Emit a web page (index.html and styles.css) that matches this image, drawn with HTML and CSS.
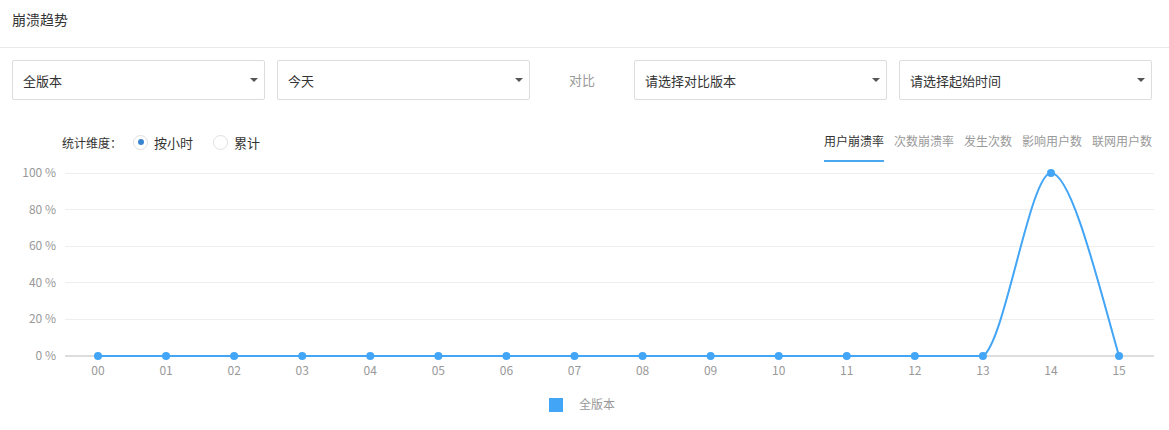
FILE: index.html
```html
<!DOCTYPE html>
<html lang="zh-CN">
<head>
  <meta charset="UTF-8">
  <title>崩溃趋势</title>
  <link rel="stylesheet" href="styles.css">
</head>
<body>
  <header class="panel-head">崩溃趋势</header>

  <section class="filters">
    <div class="select"><span>全版本</span><i class="caret"></i></div>
    <div class="select"><span>今天</span><i class="caret"></i></div>
    <div class="compare-label">对比</div>
    <div class="select"><span>请选择对比版本</span><i class="caret"></i></div>
    <div class="select"><span>请选择起始时间</span><i class="caret"></i></div>
  </section>

  <section class="chart-panel">
    <div class="toolbar">
      <div class="dimension">
        <span class="dim-label">统计维度：</span>
        <label class="radio checked"><i></i>按小时</label>
        <label class="radio"><i></i>累计</label>
      </div>
      <ul class="tabs">
        <li class="active">用户崩溃率</li>
        <li>次数崩溃率</li>
        <li>发生次数</li>
        <li>影响用户数</li>
        <li>联网用户数</li>
      </ul>
    </div>

    <!-- viewBox uses page coordinates so the numbers read straight off the screenshot -->
    <svg class="chart" viewBox="0 162 1169 268" width="1169" height="268">
      <g class="grid">
        <line x1="65" y1="173.5" x2="1154" y2="173.5"></line>
        <line x1="65" y1="209.5" x2="1154" y2="209.5"></line>
        <line x1="65" y1="246.5" x2="1154" y2="246.5"></line>
        <line x1="65" y1="282.5" x2="1154" y2="282.5"></line>
        <line x1="65" y1="319.5" x2="1154" y2="319.5"></line>
      </g>
      <line class="axis" x1="65" y1="356" x2="1154" y2="356"></line>

      <g class="y-labels">
        <text x="56" y="177">100 %</text>
        <text x="56" y="214">80 %</text>
        <text x="56" y="250">60 %</text>
        <text x="56" y="287">40 %</text>
        <text x="56" y="323">20 %</text>
        <text x="56" y="360">0 %</text>
      </g>
      <g class="x-labels" id="x-labels"></g>

      <path class="series" d="M98,356 L983,356 C1005,342 1030,173 1051,173 C1072,173 1100,290 1119,356"></path>
      <g class="dots" id="dots"></g>

      <rect class="legend-box" x="549" y="398" width="14" height="14"></rect>
      <text class="legend-text" x="579" y="409">全版本</text>
    </svg>
  </section>

  <script>
    // hourly values, percentage
    const values = [0, 0, 0, 0, 0, 0, 0, 0, 0, 0, 0, 0, 0, 0, 100, 0];
    const ns = 'http://www.w3.org/2000/svg';
    const xLabels = document.getElementById('x-labels');
    const dots = document.getElementById('dots');

    values.forEach(function(v, i) {
      const x = 98 + i * 68.07;
      const y = 356 - v * 1.83;

      const label = document.createElementNS(ns, 'text');
      label.setAttribute('x', x);
      label.setAttribute('y', 375);
      label.textContent = (i < 10 ? '0' : '') + i;
      xLabels.appendChild(label);

      const dot = document.createElementNS(ns, 'circle');
      dot.setAttribute('cx', x);
      dot.setAttribute('cy', y);
      dot.setAttribute('r', 4);
      dots.appendChild(dot);
    });
  </script>
</body>
</html>
```

FILE: styles.css
```css
body {
  margin: 0;
  background-color: #fff;
  font-family: "Noto Sans CJK SC", "Noto Sans", sans-serif;
  color: #333;
  width: 1169px;
}
.panel-head {
  height: 37px;
  padding: 10px 12px 0;
  line-height: 18px;
  font-size: 14px;
  border-bottom: 1px solid #e8e8e8;
}
.filters {
  display: flex;
  gap: 12px;
  margin-top: 12px;
  padding: 0 12px;
}
.select {
  box-sizing: border-box;
  width: 253px;
  height: 40px;
  border: 1px solid #ddd;
  border-radius: 2px;
  display: flex;
  align-items: center;
  justify-content: space-between;
  padding: 0 6px 0 10px;
  font-size: 13px;
  color: #333;
}
.caret {
  width: 0;
  height: 0;
  border-left: 4px solid transparent;
  border-right: 4px solid transparent;
  border-top: 4px solid #555;
}
.compare-label {
  width: 80px;
  text-align: center;
  line-height: 40px;
  font-size: 13px;
  color: #999;
}
.chart-panel {
  margin-top: 24px;
}
.toolbar {
  display: flex;
  justify-content: space-between;
  padding: 0 17px 0 62px;
  height: 38px;
}
.dimension {
  display: flex;
  align-items: center;
  height: 36px;
  font-size: 12px;
}
.dim-label {
  margin-right: 11px;
}
.radio {
  display: flex;
  align-items: center;
  gap: 6px;
  font-size: 13px;
  margin-right: 20px;
}
.radio i {
  box-sizing: border-box;
  width: 15px;
  height: 15px;
  border: 1px solid #e0e0e0;
  border-radius: 50%;
  display: flex;
  align-items: center;
  justify-content: center;
}
.radio.checked i::after {
  content: "";
  width: 6px;
  height: 6px;
  border-radius: 50%;
  background-color: #3a85d0;
}
.tabs {
  list-style: none;
  margin: 0;
  padding: 0;
  display: flex;
  gap: 10px;
}
.tabs li {
  box-sizing: border-box;
  height: 38px;
  line-height: 34px;
  font-size: 12px;
  color: #999;
  border-bottom: 2px solid transparent;
}
.tabs li.active {
  color: #333;
  border-bottom-color: #4aa8ee;
}
.chart {
  display: block;
}
.grid line {
  stroke: #eee;
  stroke-width: 1;
}
.axis {
  stroke: #ddd;
  stroke-width: 2;
}
.y-labels text {
  text-anchor: end;
  font-size: 12px;
  fill: #999;
}
.x-labels text {
  text-anchor: middle;
  font-size: 12px;
  fill: #999;
}
.series {
  fill: none;
  stroke: #42a5f5;
  stroke-width: 2;
}
.dots circle {
  fill: #42a5f5;
}
.legend-box {
  fill: #42a5f5;
}
.legend-text {
  font-size: 12px;
  fill: #999;
}
```
